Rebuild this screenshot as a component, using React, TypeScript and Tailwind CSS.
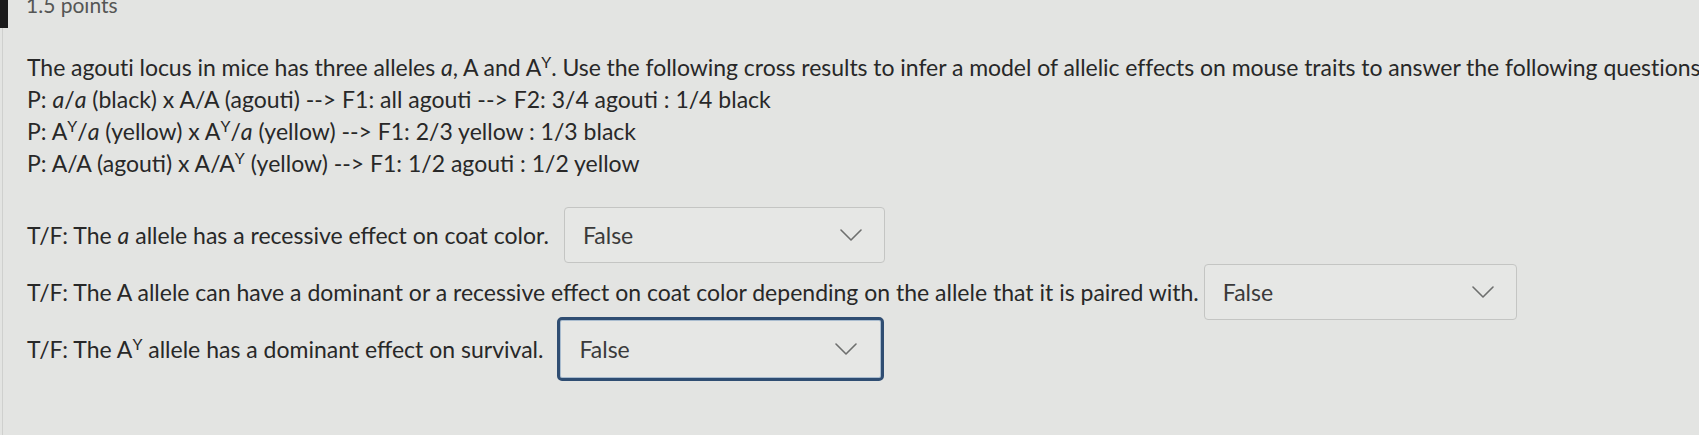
import React from "react";

const Y = () => <sup className="text-[16px]">Y</sup>;

const Chevron = () => (
  <svg width="22" height="12" viewBox="0 0 22 12" fill="none">
    <polyline points="1,1 11,11 21,1" stroke="#6e6f6e" strokeWidth="1.6" strokeLinejoin="round" strokeLinecap="round" />
  </svg>
);

function Select({ width, focused }: { width: string; focused?: boolean }) {
  return (
    <div
      className={
        focused
          ? `${width} h-[64px] rounded-[5px] border-[3px] border-[#2f4d72] shadow-[inset_0_0_0_1px_#a9bccf] flex items-center justify-between pl-[19px] pr-[24px] bg-[#e6e7e5]`
          : `${width} h-[56px] rounded-[4px] border border-[#c4c5c3] flex items-center justify-between pl-[18px] pr-[22px] bg-[#e6e7e5]`
      }
    >
      <span className="text-[23px] text-[#3a3a3a]">False</span>
      <Chevron />
    </div>
  );
}

export default function App() {
  return (
    <div className="relative h-[435px] w-[1699px] overflow-hidden bg-[#e3e4e2] font-['Lato',sans-serif] text-[#282828]">
      <div className="absolute left-0 top-0 h-[28px] w-[8px] bg-[#1b1b1b]" />
      <div className="absolute left-[2px] top-[28px] h-[407px] w-[1px] bg-[#cfd0ce]" />
      <div className="-mt-[6px] pl-[26px] text-[21px] leading-[22px] text-[#555655]">1.5 points</div>
      <div className="mt-[35px] whitespace-nowrap pl-[27px] text-[23px] leading-[32px]">
        <div className="tracking-[-0.04px]">
          The agouti locus in mice has three alleles <i>a</i>, A and A<Y />. Use the following cross results to infer a model of allelic effects on mouse traits to answer the following questions
        </div>
        <div>
          P: <i>a</i>/<i>a</i> (black) x A/A (agouti) --&gt; F1: all agouti --&gt; F2: 3/4 agouti : 1/4 black
        </div>
        <div>
          P: A<Y />/<i>a</i> (yellow) x A<Y />/<i>a</i> (yellow) --&gt; F1: 2/3 yellow : 1/3 black
        </div>
        <div>
          P: A/A (agouti) x A/A<Y /> (yellow) --&gt; F1: 1/2 agouti : 1/2 yellow
        </div>
      </div>
      <div className="mt-[28px] flex flex-col gap-[1px] whitespace-nowrap pl-[27px] text-[23px]">
        <div className="flex h-[56px] items-center gap-[15px]">
          <span>T/F: The <i>a</i> allele has a recessive effect on coat color.</span>
          <Select width="w-[321px]" />
        </div>
        <div className="flex h-[56px] items-center gap-[5px]">
          <span>T/F: The A allele can have a dominant or a recessive effect on coat color depending on the allele that it is paired with.</span>
          <Select width="w-[313px]" />
        </div>
        <div className="-mt-[4px] flex h-[64px] items-center gap-[14px]">
          <span>T/F: The A<Y /> allele has a dominant effect on survival.</span>
          <Select width="w-[327px]" focused />
        </div>
      </div>
    </div>
  );
}
